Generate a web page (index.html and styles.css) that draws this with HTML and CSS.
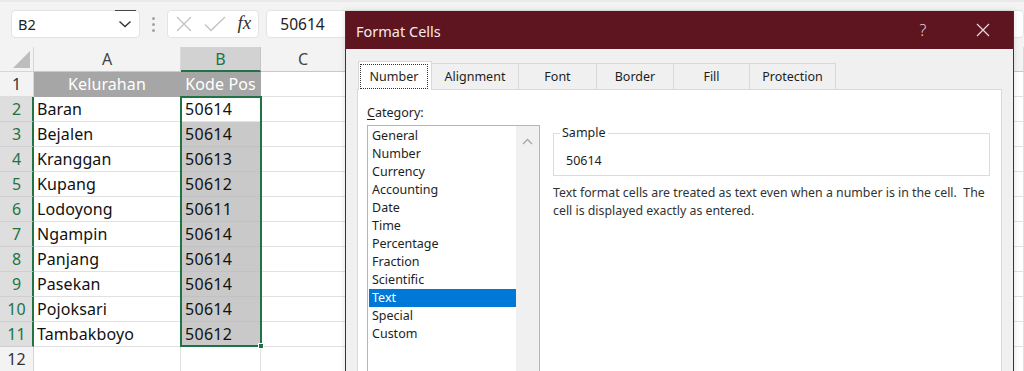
FILE: index.html
```html
<!DOCTYPE html>
<html lang="id">
<head>
<meta charset="utf-8">
<title>Format Cells</title>
<link rel="stylesheet" href="styles.css">
</head>
<body>
<div class="app">
  <div class="formula-bar">
    <div class="namebox">
      <span class="nb-text">B2</span>
      <span class="nb-drop">
        <svg width="14" height="8" viewBox="0 0 14 8"><path d="M1.5 1.5 L7 6.5 L12.5 1.5" fill="none" stroke="#333" stroke-width="1.4"/></svg>
      </span>
    </div>
    <div class="grip"><i></i><i></i><i></i></div>
    <div class="fxbox">
      <svg class="fx-x" width="16" height="16" viewBox="0 0 16 16"><path d="M1 1 L15 15 M15 1 L1 15" stroke="#c2c2c2" stroke-width="1.3" fill="none"/></svg>
      <svg class="fx-check" width="22" height="16" viewBox="0 0 22 16"><path d="M1 8.5 L7 14.5 L21 1" stroke="#c2c2c2" stroke-width="1.3" fill="none"/></svg>
      <span class="fx">fx</span>
    </div>
    <div class="formula-input">50614</div>
  </div>

  <div class="sheet">
    <div class="corner"><span class="tri"></span></div>
    <div class="colh">A</div>
    <div class="colh sel">B</div>
    <div class="colh">C</div>
    <div class="colh last"></div>

    <div class="rowh">1</div>
    <div class="cell head">Kelurahan</div>
    <div class="cell head">Kode Pos</div>
    <div class="cell"></div>
    <div class="cell"></div>

    <div class="rowh sel">2</div>
    <div class="cell">Baran</div>
    <div class="cell num active">50614</div>
    <div class="cell"></div>
    <div class="cell"></div>

    <div class="rowh sel">3</div>
    <div class="cell">Bejalen</div>
    <div class="cell num shade">50614</div>
    <div class="cell"></div>
    <div class="cell"></div>

    <div class="rowh sel">4</div>
    <div class="cell">Kranggan</div>
    <div class="cell num shade">50613</div>
    <div class="cell"></div>
    <div class="cell"></div>

    <div class="rowh sel">5</div>
    <div class="cell">Kupang</div>
    <div class="cell num shade">50612</div>
    <div class="cell"></div>
    <div class="cell"></div>

    <div class="rowh sel">6</div>
    <div class="cell">Lodoyong</div>
    <div class="cell num shade">50611</div>
    <div class="cell"></div>
    <div class="cell"></div>

    <div class="rowh sel">7</div>
    <div class="cell">Ngampin</div>
    <div class="cell num shade">50614</div>
    <div class="cell"></div>
    <div class="cell"></div>

    <div class="rowh sel">8</div>
    <div class="cell">Panjang</div>
    <div class="cell num shade">50614</div>
    <div class="cell"></div>
    <div class="cell"></div>

    <div class="rowh sel">9</div>
    <div class="cell">Pasekan</div>
    <div class="cell num shade">50614</div>
    <div class="cell"></div>
    <div class="cell"></div>

    <div class="rowh sel">10</div>
    <div class="cell">Pojoksari</div>
    <div class="cell num shade">50614</div>
    <div class="cell"></div>
    <div class="cell"></div>

    <div class="rowh sel">11</div>
    <div class="cell">Tambakboyo</div>
    <div class="cell num shade">50612</div>
    <div class="cell"></div>
    <div class="cell"></div>

    <div class="rowh">12</div>
    <div class="cell"></div>
    <div class="cell"></div>
    <div class="cell"></div>
    <div class="cell"></div>

    <div class="selection"><span class="handle"></span></div>
  </div>

  <div class="dialog">
    <div class="titlebar">
      <span class="title">Format Cells</span>
      <span class="tbtn help">?</span>
      <span class="tbtn close">
        <svg width="14" height="14" viewBox="0 0 14 14"><path d="M1 1 L13 13 M13 1 L1 13" stroke="#eadcde" stroke-width="1.2" fill="none"/></svg>
      </span>
    </div>
    <div class="dbody">
      <div class="tabs">
        <div class="tab active w-number"><span class="focus">Number</span></div>
        <div class="tab w-align">Alignment</div>
        <div class="tab w-font">Font</div>
        <div class="tab w-border">Border</div>
        <div class="tab w-fill">Fill</div>
        <div class="tab w-prot">Protection</div>
      </div>
      <div class="panel">
        <div class="left">
          <div class="cat-label"><u>C</u>ategory:</div>
          <div class="listbox">
            <ul class="items">
              <li>General</li>
              <li>Number</li>
              <li>Currency</li>
              <li>Accounting</li>
              <li>Date</li>
              <li>Time</li>
              <li>Percentage</li>
              <li>Fraction</li>
              <li>Scientific</li>
              <li class="selected">Text</li>
              <li>Special</li>
              <li>Custom</li>
            </ul>
            <div class="scrollbar">
              <svg width="11" height="7" viewBox="0 0 11 7"><path d="M1 6 L5.5 1.5 L10 6" fill="none" stroke="#a6a6a6" stroke-width="1.3"/></svg>
            </div>
          </div>
        </div>
        <div class="right">
          <fieldset class="sample">
            <legend>Sample</legend>
            <div class="sample-val">50614</div>
          </fieldset>
          <p class="desc">Text format cells are treated as text even when a number is in the cell.&nbsp; The cell is displayed exactly as entered.</p>
        </div>
      </div>
    </div>
  </div>
</div>
</body>
</html>
```

FILE: styles.css
```css
* { box-sizing: border-box; }
html, body { margin: 0; padding: 0; }
body {
  width: 1024px;
  height: 371px;
  overflow: hidden;
  background: #ffffff;
  font-family: "Noto Sans", "Open Sans", sans-serif;
}
.app { position: relative; width: 1024px; height: 371px; overflow: hidden; }

/* ---------- formula bar ---------- */
.formula-bar {
  height: 47px;
  background: #f3f3f3;
  display: flex;
  align-items: flex-start;
  padding: 10px 0 0 11px;
  border-top: 2px solid #e9e9e9;
}
.namebox {
  width: 129px;
  height: 28px;
  margin-top: -2px;
  background: #fff;
  border: 1px solid #e3e3e3;
  border-radius: 4px;
  display: flex;
  align-items: center;
  justify-content: space-between;
  padding: 0 3px 0 6px;
  font-size: 14.5px;
  color: #222;
}
.nb-drop {
  width: 21px;
  height: 27px;
  border-top: 1px solid #444;
  display: flex;
  align-items: center;
  justify-content: center;
  margin-top: -1px;
}
.grip {
  width: 27px;
  height: 28px;
  margin-top: -2px;
  display: flex;
  flex-direction: column;
  align-items: center;
  justify-content: center;
  gap: 3px;
}
.grip i { display: block; width: 3px; height: 3px; border-radius: 50%; background: #a3a3a3; }
.fxbox {
  width: 93px;
  height: 28px;
  margin-top: -2px;
  background: #fff;
  border: 1px solid #e3e3e3;
  border-radius: 4px;
  display: flex;
  align-items: center;
  padding-left: 8px;
}
.fx-x { margin-right: 12px; }
.fx-check { margin-right: 12px; }
.fx {
  font-family: "Liberation Serif", "DejaVu Serif", serif;
  font-style: italic;
  font-size: 19px;
  color: #333;
  line-height: 1;
  margin-top: -3px;
}
.formula-input {
  margin-top: -2px;
  margin-left: 7px;
  width: 760px;
  height: 28px;
  background: #fff;
  border: 1px solid #e3e3e3;
  border-radius: 4px;
  padding-left: 13px;
  font-size: 15.5px;
  line-height: 26px;
  color: #222;
}

/* ---------- sheet ---------- */
.sheet {
  position: relative;
  display: grid;
  grid-template-columns: 34px 147px 80px 85px 1fr;
  grid-auto-rows: 25px;
  font-size: 16px;
  color: #111;
}
.corner {
  background: #f3f3f3;
  border-right: 1px solid #d6d6d6;
  border-bottom: 1px solid #d6d6d6;
  position: relative;
}
.tri {
  position: absolute;
  right: 3px;
  bottom: 3px;
  width: 0; height: 0;
  border-left: 17px solid transparent;
  border-bottom: 17px solid #bdbdbd;
}
.colh {
  background: #f3f3f3;
  border-right: 1px solid #dadada;
  border-bottom: 1px solid #c8c8c8;
  display: flex;
  align-items: center;
  justify-content: center;
  color: #444;
  font-size: 16px;
}
.colh.sel {
  background: #d2d2d2;
  color: #217346;
  border-bottom: 2px solid #217346;
  border-right-color: #c4c4c4;
}
.rowh {
  background: #f3f3f3;
  border-right: 1px solid #d6d6d6;
  border-bottom: 1px solid #dcdcdc;
  display: flex;
  align-items: center;
  justify-content: center;
  color: #333;
  font-size: 16px;
}
.rowh.sel {
  background: #dedede;
  color: #217346;
  border-right: 2px solid #217346;
  border-bottom-color: #cfcfcf;
  padding-left: 1px;
}
.cell {
  border-right: 1px solid #e1e1e1;
  border-bottom: 1px solid #e1e1e1;
  padding-left: 3px;
  display: flex;
  align-items: center;
  white-space: nowrap;
  overflow: hidden;
  letter-spacing: 0.1px;
}
.cell.head {
  background: #a6a6a6;
  color: #ffffff;
  justify-content: center;
  padding-left: 0;
  border-color: #a6a6a6;
}
.cell.num { padding-left: 4px; letter-spacing: 0.3px; }
.cell.shade { background: #c9c9c9; border-bottom-color: #c2c2c2; border-right-color: #c9c9c9; }
.cell.active { background: #ffffff; }
.selection {
  position: absolute;
  left: 180px;
  top: 49px;
  width: 82px;
  height: 251px;
  border: 2px solid #217346;
  z-index: 2;
  pointer-events: none;
}
.handle {
  position: absolute;
  right: -4px;
  bottom: -4px;
  width: 6px;
  height: 6px;
  background: #217346;
  border: 1px solid #fff;
}

/* ---------- dialog ---------- */
.dialog {
  position: absolute;
  left: 345px;
  top: 11px;
  width: 669px;
  height: 372px;
  background: #f0f0f0;
  border-left: 1px solid #6a1e29;
  border-right: 1px solid #6a1e29;
  box-shadow: 0 0 6px rgba(0,0,0,0.12);
  font-size: 12.5px;
  color: #1e1e1e;
  z-index: 5;
}
.titlebar {
  height: 38px;
  background: #5e1520;
  display: flex;
  align-items: center;
  padding-left: 10px;
}
.title {
  color: #f4eaec;
  font-size: 14.5px;
  flex: 1;
  padding-top: 1px;
}
.tbtn {
  width: 60px;
  height: 38px;
  display: flex;
  align-items: center;
  justify-content: center;
  color: #e6d6d9;
}
.help { font-size: 16px; font-weight: 300; }
.dbody { padding: 11px 11px 0 11px; }
.tabs {
  display: flex;
  align-items: flex-end;
  height: 29px;
  margin-left: 1px;
}
.tab {
  height: 26px;
  border: 1px solid #d9d9d9;
  border-left: none;
  border-bottom: none;
  background: #f0f0f0;
  display: flex;
  align-items: center;
  justify-content: center;
  color: #1e1e1e;
}
.tab.active {
  height: 29px;
  background: #ffffff;
  border-left: 1px solid #d9d9d9;
  margin-bottom: -1px;
  position: relative;
  z-index: 1;
  padding: 2px 3px 1px 1px;
}
.focus {
  width: 100%;
  height: 100%;
  border: 1px dotted #333;
  display: flex;
  align-items: center;
  justify-content: center;
}
.w-number { width: 74px; }
.w-align { width: 87px; }
.w-font { width: 78px; }
.w-border { width: 77px; }
.w-fill { width: 76px; }
.w-prot { width: 86px; }

.panel {
  background: #ffffff;
  border: 1px solid #d9d9d9;
  height: 300px;
  display: grid;
  grid-template-columns: 173px 446px;
  column-gap: 13px;
  padding: 15px 0 0 9px;
}
.cat-label { line-height: 16px; height: 16px; margin-bottom: 4px; }
.cat-label u { text-decoration-thickness: 1px; text-underline-offset: 2px; }
.listbox {
  height: 260px;
  border: 1px solid #b5b5b5;
  display: flex;
  background: #fff;
}
.items {
  list-style: none;
  margin: 0;
  padding: 1px 0 0 1px;
  flex: 1;
}
.items li {
  height: 18px;
  line-height: 18px;
  padding-left: 3px;
  white-space: nowrap;
}
.items li.selected { background: #0078d7; color: #ffffff; }
.scrollbar {
  width: 23px;
  background: #f0f0f0;
  display: flex;
  justify-content: center;
  padding-top: 12px;
}
.scrollbar svg { margin-left: -1px; }
.right { padding-top: 20px; }
.sample {
  margin: 0;
  width: 437px;
  border: 1px solid #dcdcdc;
  padding: 1px 6px 5px 12px;
  min-width: 0;
}
.sample legend {
  padding: 0 2px;
  margin-left: -6px;
  line-height: 16px;
}
.sample-val { line-height: 18px; padding-top: 10px; }
.desc {
  margin: 8px 0 0 0;
  line-height: 18px;
  color: #333;
  font-size: 12.35px;
}
```
